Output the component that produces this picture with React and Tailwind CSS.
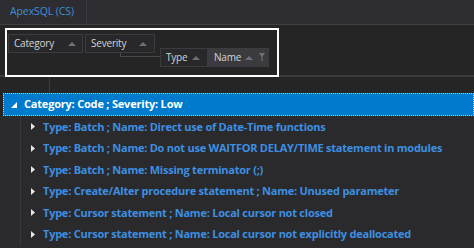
import React from "react";

const rows = [
  "Type: Batch ; Name: Direct use of Date-Time functions",
  "Type: Batch ; Name: Do not use WAITFOR DELAY/TIME statement in modules",
  "Type: Batch ; Name: Missing terminator (;)",
  "Type: Create/Alter procedure statement ; Name: Unused parameter",
  "Type: Cursor statement ; Name: Local cursor not closed",
  "Type: Cursor statement ; Name: Local cursor not explicitly deallocated",
];

const SortArrow = () => (
  <svg width="8" height="5" viewBox="0 0 8 5" className="ml-auto shrink-0">
    <path d="M0 5 L4 1 L8 5 Z" fill="#707074" />
  </svg>
);

const Chip = ({ label, width, pr = "pr-[6px]", hover, filter, className = "" }) => (
  <div
    className={`flex items-center h-[19px] border border-[#3c3c40] pl-[5px] ${pr} ${width} ${
      hover ? "bg-[#3b3b3f]" : "bg-[#28282a]"
    } ${className}`}
  >
    <span className="text-[#d4d4d4] tracking-[-0.2px] mr-[4px]">{label}</span>
    <SortArrow />
    {filter && (
      <svg width="6" height="9" viewBox="0 0 6 9" className="ml-[6px] shrink-0">
        <path d="M0 0 H6 L3.6 3.5 V8 H2.4 V3.5 Z" fill="#707074" />
      </svg>
    )}
  </div>
);

const App = () => {
  return (
    <div
      className="w-[474px] h-[248px] bg-[#2a2a2d] overflow-hidden text-[10px]"
      style={{ fontFamily: '"Open Sans", "Noto Sans", sans-serif' }}
    >
      {/* tab strip */}
      <div className="h-[25px] flex bg-[#2d2d31] border-b border-[#3f3f46]">
        <div className="w-[87px] border-r border-[#3a3a40] pl-[10px] flex items-center text-[#3e8fda] text-[10.5px] tracking-[-0.1px]">
          ApexSQL (CS)
        </div>
      </div>

      {/* group panel */}
      <div className="h-[52px] bg-[#252526] border-b-2 border-[#3a3a3e] pt-[3px] pl-[5px]">
        <div className="w-[274px] h-[49px] border-2 border-white relative">
          <div className="flex items-start pt-[4px] pl-[1px]">
            <Chip label="Category" width="w-[75px]" />
            <Chip label="Severity" width="w-[70px]" pr="pr-[7px]" className="ml-[2px]" />
          </div>
          {/* connector line */}
          <div className="absolute left-[113px] top-[23px] w-[40px] h-[4px] border-l border-b border-[#4a4a4e]" />
          <div className="absolute left-[153px] top-[18px] flex">
            <Chip label="Type" width="w-[48px]" pr="pr-[7px]" className="bg-[#2e2e31]" />
            <Chip label="Name" width="w-[61px]" pr="pr-[5px]" hover filter />
          </div>
        </div>
      </div>

      {/* column header area */}
      <div className="h-[16px] bg-[#252526] flex">
        <div className="w-[50px] border-r border-[#3a3a3e]" />
      </div>

      {/* tree */}
      <div className="flex">
        <div className="w-[3px] shrink-0 bg-[#252526]" />
        <div className="flex-1 min-w-0">
          <div className="h-[23px] bg-[#007acc] border border-dotted border-[#a8d4f2] flex items-center pl-[7px] text-white font-bold text-[11px] tracking-[-0.2px] whitespace-nowrap">
            <svg width="6" height="6" viewBox="0 0 6 6" className="mr-[7px] shrink-0">
              <path d="M6 0 V6 H0 Z" fill="#ffffff" />
            </svg>
            Category: Code ; Severity: Low
          </div>
        </div>
      </div>
      <div className="flex">
        <div className="w-[21px] shrink-0 border-r border-[#38383b] bg-[#2b2b2e]" />
        <div className="flex-1 min-w-0">
          {rows.map((r) => (
            <div
              key={r}
              className="h-[21.5px] flex items-center pl-[10px] text-[#3d8fe0] font-bold text-[11px] tracking-[-0.24px] whitespace-nowrap"
            >
              <svg width="4" height="7" viewBox="0 0 4 7" className="mr-[8px] shrink-0">
                <path d="M0 0 L4 3.5 L0 7 Z" fill="#e8e8e8" />
              </svg>
              {r}
            </div>
          ))}
        </div>
      </div>
    </div>
  );
};

export default App;
